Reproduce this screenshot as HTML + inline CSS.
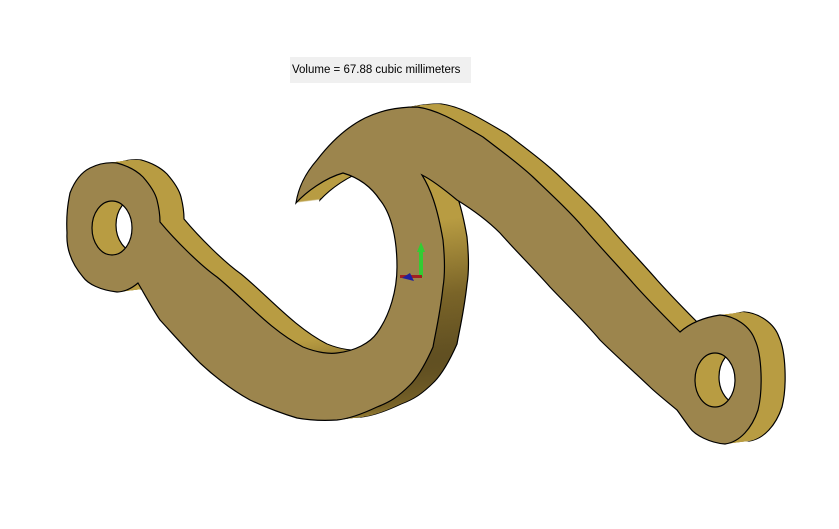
<!DOCTYPE html>
<html><head><meta charset="utf-8"><style>
html,body{margin:0;padding:0;background:#fff;width:839px;height:529px;overflow:hidden}
.lbl{position:absolute;left:290px;top:57px;width:181px;height:26px;background:#f0f0f0;font-family:"Liberation Sans",sans-serif;font-size:11.5px;color:#000;line-height:26px;padding-left:2px;box-sizing:border-box}
svg{position:absolute;left:0;top:0}
</style></head><body>
<svg width="839" height="529" viewBox="0 0 839 529">
<defs>
<radialGradient id="side" gradientUnits="userSpaceOnUse" cx="440" cy="370" r="150">
<stop offset="0" stop-color="#5a4a20"/><stop offset="0.5" stop-color="#7a6428"/><stop offset="1" stop-color="#b89c42"/>
</radialGradient>
<path id="P" fill-rule="evenodd" d="
M160,222 C175,240 200,265 217,277 C245,300 270,330 303,347 C318,353 330,354 337,353 C355,351 370,343 377,333 C390,315 397,290 397,267 C397,240 392,215 380,200 C372,188 360,178 343,173 C325,178 306,192 296,203 C298,190 303,176 317,160 C330,143 345,128 365,118 C380,111 395,107 417,107 C440,110 462,125 483,137 C500,150 518,163 533,177 C555,198 570,212 583,227 C600,247 620,268 633,283 C650,302 668,320 680,332 C688,325 700,318 720,315 C735,316 750,326 755,340 C762,355 763,390 758,410 C752,428 740,442 725,444 C710,443 695,435 690,428 C684,420 680,414 677,410 C665,400 655,392 650,387 C630,368 615,355 600,340 C585,322 565,303 550,287 C535,270 515,250 500,233 C485,218 470,208 457,200 C445,190 432,180 422,175 C430,188 437,205 443,240 C445,260 445,275 443,287 C440,315 435,335 433,347 C425,365 418,377 410,385 C398,397 390,402 377,407 C360,415 348,419 337,420 C320,421 308,420 297,418 C280,413 265,407 250,400 C232,390 215,377 200,363 C185,348 172,333 160,320 C152,308 145,295 138,283 C130,290 122,292 117,292 C100,290 88,284 83,277 C72,264 66,250 67,233 C66,215 68,203 70,193 C75,180 82,172 90,168 C98,164 108,162 117,163 C128,166 137,171 143,177 C150,185 155,192 157,200 C159,208 160,215 160,222 Z
M92,228 a20,27 0 1,0 40,0 a20,27 0 1,0 -40,0 Z
M695,380 a20,27 0 1,0 40,0 a20,27 0 1,0 -40,0 Z"/>
</defs>
<g fill="url(#side)">
<use href="#P" transform="translate(24,-3)" stroke="#000" stroke-width="1.2"/>
<use href="#P" transform="translate(23,-2.9)"/>
<use href="#P" transform="translate(22,-2.75)"/>
<use href="#P" transform="translate(21,-2.6)"/>
<use href="#P" transform="translate(20,-2.5)"/>
<use href="#P" transform="translate(19,-2.4)"/>
<use href="#P" transform="translate(18,-2.25)"/>
<use href="#P" transform="translate(17,-2.1)"/>
<use href="#P" transform="translate(16,-2)"/>
<use href="#P" transform="translate(15,-1.9)"/>
<use href="#P" transform="translate(14,-1.75)"/>
<use href="#P" transform="translate(13,-1.6)"/>
<use href="#P" transform="translate(12,-1.5)"/>
<use href="#P" transform="translate(11,-1.4)"/>
<use href="#P" transform="translate(10,-1.25)"/>
<use href="#P" transform="translate(9,-1.1)"/>
<use href="#P" transform="translate(8,-1)"/>
<use href="#P" transform="translate(7,-0.9)"/>
<use href="#P" transform="translate(6,-0.75)"/>
<use href="#P" transform="translate(5,-0.6)"/>
<use href="#P" transform="translate(4,-0.5)"/>
<use href="#P" transform="translate(3,-0.4)"/>
<use href="#P" transform="translate(2,-0.25)"/>
<use href="#P" transform="translate(1,-0.1)"/>
</g>
<use href="#P" fill="#9c854d" stroke="#000" stroke-width="1.2"/>
<g>
<rect x="419" y="250" width="4" height="27" fill="#3c3"/>
<polygon points="417,252 421,242 425,252" fill="#3c3"/>
<rect x="400" y="275" width="22" height="3" fill="#a02020"/>
<polygon points="402,278 410,273 414,281" fill="#2020a0"/>
</g>
</svg>
<div class="lbl">Volume = 67.88 cubic millimeters</div>
</body></html>
